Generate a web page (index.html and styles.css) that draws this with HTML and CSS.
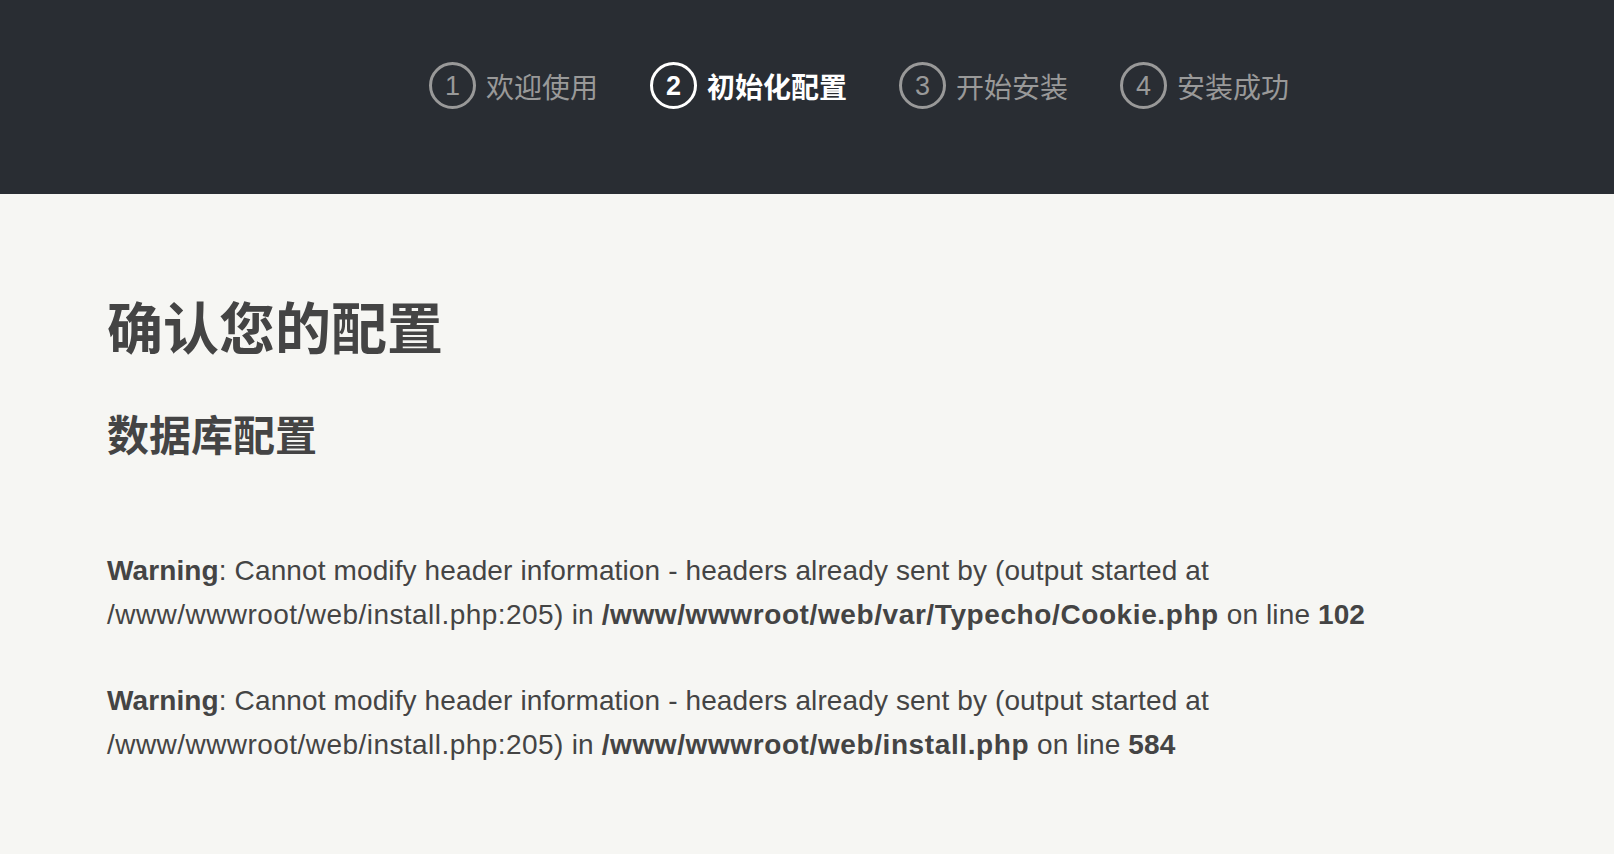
FILE: index.html
```html
<!DOCTYPE html>
<html lang="zh-CN">
<head>
<meta charset="utf-8">
<title>Typecho 安装程序</title>
<link rel="stylesheet" href="styles.css">
</head>
<body>
<header class="patch">
  <ol class="steps">
    <li class="step"><span class="num">1</span><span class="label">欢迎使用</span></li>
    <li class="step current"><span class="num">2</span><span class="label">初始化配置</span></li>
    <li class="step"><span class="num">3</span><span class="label">开始安装</span></li>
    <li class="step"><span class="num">4</span><span class="label">安装成功</span></li>
  </ol>
</header>
<main class="content">
  <h1 class="title">确认您的配置</h1>
  <h2 class="subtitle">数据库配置</h2>
  <p class="warn"><b>Warning</b>: Cannot modify header information - headers already sent by (output started at <span class="path">/www/wwwroot/web/install.php:205)</span> in <b class="path-b">/www/wwwroot/web/var/Typecho/Cookie.php</b> on line <b>102</b></p>
  <p class="warn"><b>Warning</b>: Cannot modify header information - headers already sent by (output started at <span class="path">/www/wwwroot/web/install.php:205)</span> in <b class="path-b">/www/wwwroot/web/install.php</b> on line <b>584</b></p>
</main>
</body>
</html>
```
FILE: styles.css
```css
html, body {
  margin: 0;
  padding: 0;
}
body {
  background: #f6f6f3;
  color: #444;
  font-family: "Liberation Sans", "Noto Sans CJK SC", sans-serif;
}
.patch {
  background: #292d33;
  height: 194px;
  box-sizing: border-box;
  padding-top: 62px;
}
.steps {
  list-style: none;
  margin: 0;
  padding: 0 0 0 104px;
  display: flex;
  justify-content: center;
  gap: 52px;
  color: #999;
}
.step {
  display: flex;
  align-items: center;
  gap: 10px;
  font-family: "Noto Sans CJK SC", sans-serif;
  font-size: 28px;
}
.num {
  box-sizing: border-box;
  width: 47px;
  height: 47px;
  padding-top: 2px;
  border: 3px solid #999;
  border-radius: 50%;
  display: flex;
  align-items: center;
  justify-content: center;
  font-family: "Liberation Sans", sans-serif;
  font-size: 27px;
}
.current {
  color: #fff;
  font-weight: bold;
}
.current .num {
  border-color: #fff;
}
.content {
  max-width: 1400px;
  padding: 0 107px;
}
.title {
  margin: 97px 0 0;
  font-family: "Noto Sans CJK SC", sans-serif;
  font-size: 56px;
  line-height: 1.2;
  font-weight: bold;
}
.subtitle {
  margin: 50px 0 0;
  font-family: "Noto Sans CJK SC", sans-serif;
  font-size: 42px;
  line-height: 1.2;
  font-weight: bold;
}
.warn {
  margin: 90px 0 0;
  font-size: 28px;
  line-height: 44px;
  letter-spacing: 0.12px;
}
.warn + .warn {
  margin-top: 42px;
}
.path {
  letter-spacing: 0.45px;
}
.path-b {
  letter-spacing: 0.6px;
}
```
